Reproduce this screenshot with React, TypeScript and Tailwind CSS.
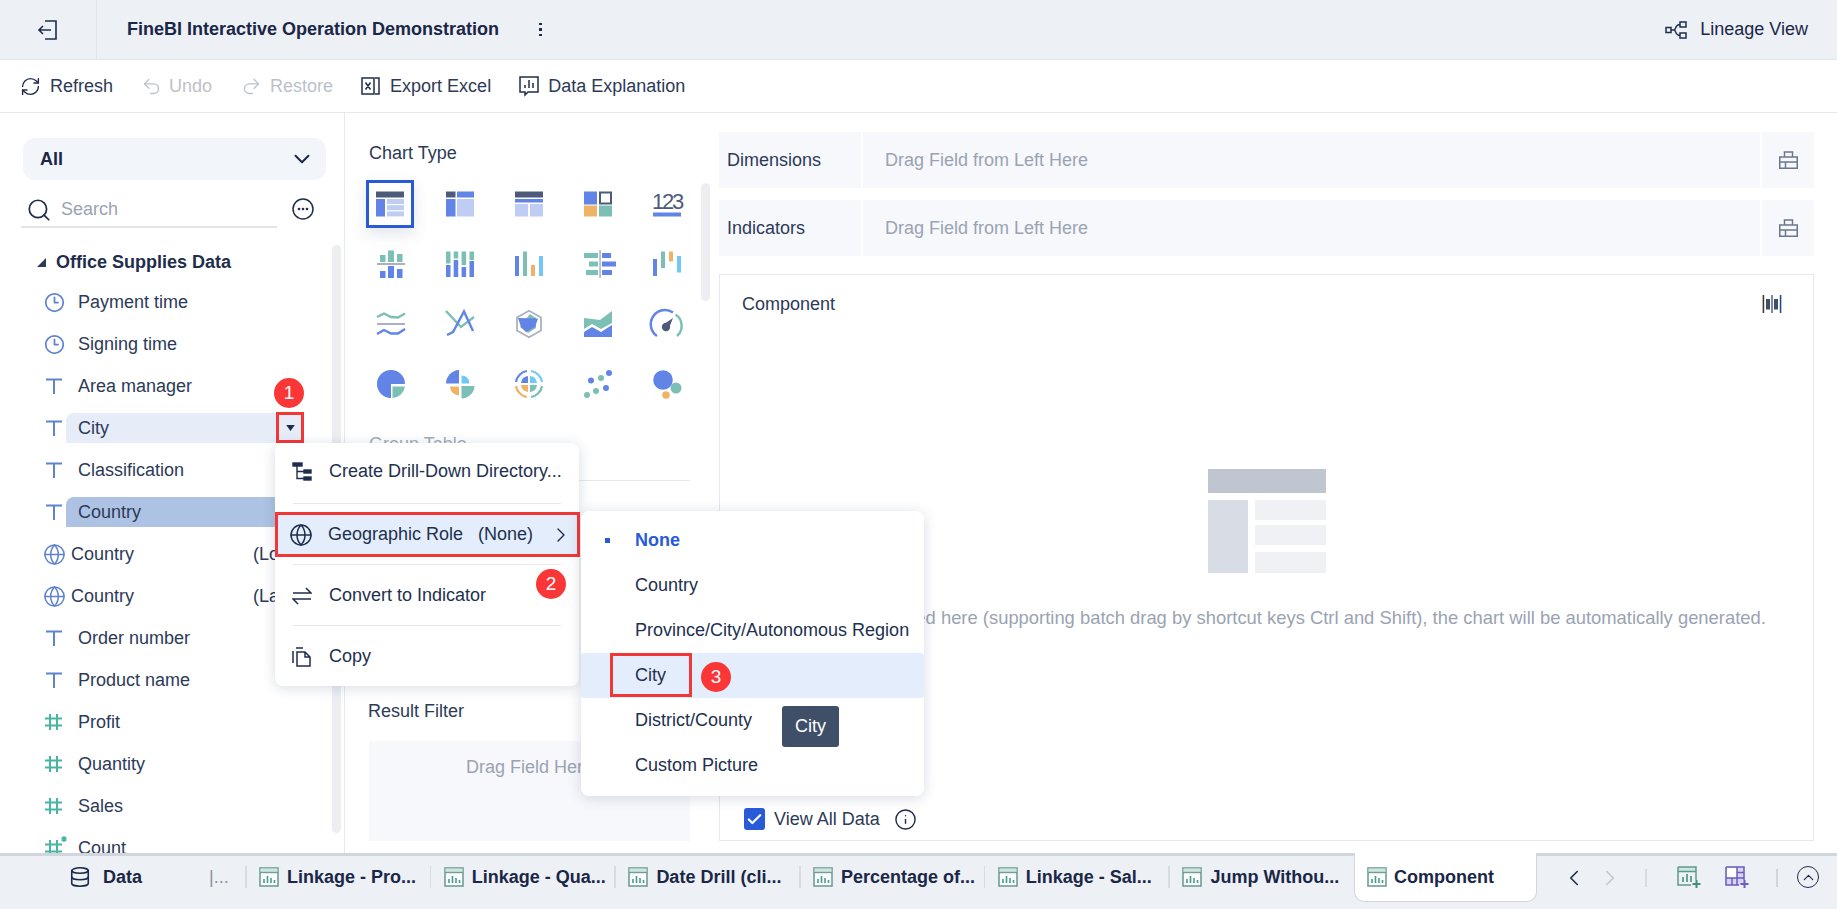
import React from "react";
import { ChevronDown, ChevronLeft, ChevronRight, ChevronUp, RefreshCw, Undo2, Redo2, Search, Globe, Clock3, Info, Check, Database } from "lucide-react";

const B = "#6184e6", P = "#bfcdf5", T = "#7cbfb4", O = "#efb366", D = "#4d5a7a", L = "#72c8f4";

function R({ x, y, w, h, f }: { x: number; y: number; w: number; h: number; f: string }) {
  return <rect x={x} y={y} width={w} height={h} fill={f} />;
}

const chartIcons: React.ReactNode[] = [
  <><R x={0} y={1.5} w={28} h={6} f={D} /><R x={0} y={9} w={9} h={17.5} f={B} /><R x={11} y={9} w={17} h={5} f={P} /><R x={11} y={15.2} w={17} h={5} f={P} /><R x={11} y={21.4} w={17} h={5} f={P} /></>,
  <><R x={0} y={1.5} w={9.5} h={6} f={D} /><R x={11} y={1.5} w={17} h={6} f={B} /><R x={0} y={9} w={9.5} h={17.5} f={B} /><R x={11} y={9} w={17} h={17.5} f={P} /></>,
  <><R x={0} y={1.5} w={28} h={6} f={D} /><R x={0} y={9} w={28} h={3.5} f={B} /><R x={0} y={14} w={13} h={12.5} f={P} /><R x={15} y={14} w={13} h={12.5} f={P} /></>,
  <><R x={0} y={1.5} w={13} h={13} f={B} /><rect x={16} y={2.5} width={11} height={11} fill="none" stroke={D} strokeWidth={2} /><R x={0} y={15.5} w={13} h={11} f={O} /><R x={15} y={15.5} w={13} h={11} f={T} /></>,
  <><text x={14} y={18.5} textAnchor="middle" fontSize={22} fill={D} style={{ fontFamily: "Liberation Sans, sans-serif", letterSpacing: "-2.2px" }}>123</text><R x={0} y={22.5} w={28} h={4} f={B} /></>,

  <><R x={3} y={5} w={5.5} h={7} f={T} /><R x={11} y={0.5} w={6} h={11.5} f={T} /><R x={20} y={4} w={5.5} h={8} f={T} /><R x={0} y={13} w={28} h={2} f="#a9b1c2" /><R x={3} y={21} w={5.5} h={7} f={B} /><R x={11} y={16} w={6} h={12} f={B} /><R x={20} y={19} w={5.5} h={9} f={B} /></>,
  <><R x={0} y={1.5} w={4.5} h={12} f={T} /><R x={0} y={15} w={4.5} h={12} f={B} /><R x={7.7} y={1.5} w={4.5} h={7} f={T} /><R x={7.7} y={10} w={4.5} h={17} f={B} /><R x={15.6} y={1.5} w={4.5} h={13.5} f={T} /><R x={15.6} y={17} w={4.5} h={10} f={B} /><R x={23.5} y={1.5} w={4.5} h={8.5} f={T} /><R x={23.5} y={11} w={4.5} h={16} f={B} /></>,
  <><R x={0} y={6} w={4} h={20} f={B} /><R x={8} y={1.5} w={4} h={24.5} f={T} /><R x={16} y={15} w={4} h={11} f={O} /><R x={24} y={6} w={4} h={20} f={L} /></>,
  <><R x={15.3} y={0} w={1.5} h={28} f="#a9b1c2" /><R x={0} y={3} w={14} h={5} f={T} /><R x={5} y={11.5} w={9} h={5} f={T} /><R x={2} y={20} w={12} h={5} f={T} /><R x={18} y={3} w={9} h={5} f={B} /><R x={18} y={11.5} w={14} h={5} f={B} /><R x={18} y={20} w={10} h={5} f={B} /></>,
  <><R x={0} y={9} w={4} h={17} f={B} /><R x={8} y={1.5} w={4} h={16.5} f={T} /><R x={16} y={1.5} w={4} h={10} f={O} /><R x={24} y={6} w={4} h={16.5} f={L} /></>,

  <><path d="M0 7 L7 3.5 L14 7 L21 7.5 L28 3.5" fill="none" stroke={T} strokeWidth={2.4} /><R x={0} y={13} w={28} h={2} f="#a9b1c2" /><path d="M0 24 L7 20 L14 23.5 L21 23.5 L28 19" fill="none" stroke={B} strokeWidth={2.4} /></>,
  <><path d="M0 1 L15 17 L28 7" fill="none" stroke={T} strokeWidth={2.4} /><path d="M1 25 L7 22 L18 1.5 L27 21" fill="none" stroke={B} strokeWidth={2.4} /></>,
  <><path d="M14 0.8 L26 7.5 L26 20.5 L14 27.2 L2 20.5 L2 7.5 Z" fill="none" stroke="#a9b1c2" strokeWidth={1.8} /><path d="M15 4 L21 8 L21 18 L13 23 L5 17 Z" fill={T} /><path d="M3 8 L23 8.5 L20 17 L11 22 L6 17 Z" fill={B} /></>,
  <><path d="M0 8 L8 9 L16 10 L28 1 L28 13 L17 19 L8 14 L0 19 Z" fill={T} /><path d="M0 22 L8 17 L17 22 L28 15 L28 27 L0 27 Z" fill={B} /></>,
  <><path d="M4 26 A13.5 13.5 0 0 1 20 2.5" fill="none" stroke={B} strokeWidth={2.5} /><path d="M22.5 4.5 A13.5 13.5 0 0 1 24 26" fill="none" stroke={T} strokeWidth={2.5} /><circle cx={13} cy={17} r={4.2} fill={D} /><path d="M10.5 14.5 L20 8 L15.5 19.5 Z" fill={D} /></>,

  <><path d="M14 14 H28 A14 14 0 1 0 14 28 Z" fill={B} /><path d="M15.5 16.5 H28 A13.5 13.5 0 0 1 15.5 28 Z" fill={T} /></>,
  <><path d="M13 13.5 V0 A13.5 13.5 0 0 0 0 13.5 Z" fill={B} /><path d="M15.5 13.5 V5.5 A8 8 0 0 1 23.5 13.5 Z" fill={L} /><path d="M13 16.5 H4 A9 9 0 0 0 13 25.5 Z" fill={O} /><path d="M15.5 16 H28.5 A13 13 0 0 1 15.5 28.5 Z" fill={T} /></>,
  <><path d="M13 13 L13 6 A8 8 0 0 0 6 13 Z" fill={B} /><path d="M15 13 L15 6 A8 8 0 0 1 22 13 Z" fill={L} /><path d="M13 15 L6 15 A8 8 0 0 0 13 22 Z" fill={O} /><path d="M15 15 L22 15 A8 8 0 0 1 15 22 Z" fill={T} /><path d="M1 12 A13 13 0 0 1 12 1" fill="none" stroke={B} strokeWidth={2.2} /><path d="M16 1 A13 13 0 0 1 27 12" fill="none" stroke={L} strokeWidth={2.2} /><path d="M1 16 A13 13 0 0 0 12 27" fill="none" stroke={O} strokeWidth={2.2} /><path d="M16 27 A13 13 0 0 0 27 16" fill="none" stroke={T} strokeWidth={2.2} /></>,
  <><circle cx={7} cy={10.5} r={3} fill={B} /><circle cx={17} cy={8} r={3} fill={T} /><circle cx={25} cy={3} r={3} fill={B} /><circle cx={3} cy={25} r={3} fill={T} /><circle cx={12} cy={21} r={3} fill={T} /><circle cx={22} cy={18} r={3} fill={B} /></>,
  <><circle cx={10} cy={10} r={9.8} fill={B} /><circle cx={23} cy={18} r={5.5} fill={T} /><circle cx={13} cy={25} r={3.8} fill={O} /></>,
];

function ChartIcon({ i }: { i: number }) {
  return <svg width="28" height="28" viewBox="0 0 28 28" className="overflow-visible">{chartIcons[i]}</svg>;
}

function TypeIcon() {
  return <svg width="18" height="18" viewBox="0 0 18 18" fill="none" stroke="#5f83cf" strokeWidth="2"><path d="M1 2.5 H17 M9 2.5 V17" /></svg>;
}
function HashIcon({ star }: { star?: boolean }) {
  return (
    <svg width="20" height="18" viewBox="0 0 20 18" fill="none" stroke="#46b5a2" strokeWidth="2" className="overflow-visible">
      <path d="M1 5.5 H18 M1 12.5 H18 M6 1 V17 M13 1 V17" />
      {star && <path d="M20 -3 V3 M17.5 -1.5 L22.5 1.5 M22.5 -1.5 L17.5 1.5" strokeWidth="1.5" />}
    </svg>
  );
}
function TabIcon() {
  return (
    <svg width="20" height="20" viewBox="0 0 20 20" fill="none" className="shrink-0">
      <rect x="1" y="1" width="18" height="18" stroke="#6f9e95" strokeWidth="1.6" fill="#fbfcfd" />
      <rect x="1.5" y="1.5" width="17" height="4" fill="#cfe6e0" />
      <path d="M1 5.5 H19" stroke="#6f9e95" strokeWidth="1.4" />
      <path d="M5 16 V12 M8.5 16 V9 M12 16 V11 M15.5 16 V13" stroke="#4c9a8c" strokeWidth="1.6" />
    </svg>
  );
}

function Row({ icon, children }: { icon: React.ReactNode; children: React.ReactNode }) {
  return (
    <div className="flex h-[42px] items-center">
      <div className="flex w-[26px] ml-[41px] justify-center shrink-0">{icon}</div>
      {children}
    </div>
  );
}
const Txt = ({ children }: { children: React.ReactNode }) => <span className="ml-[11px] pl-0">{children}</span>;

function Badge({ n, cls }: { n: number; cls: string }) {
  return <div className={"absolute w-[30px] h-[30px] rounded-full bg-[#fb3636] text-white flex items-center justify-center text-[19px] " + cls}>{n}</div>;
}

const clock = <Clock3 size={21} color="#5f83cf" strokeWidth={2} />;
const globe = <Globe size={23} color="#5f83cf" strokeWidth={1.6} />;
const menuRow = "flex items-center h-[43px] relative";
const tabs = ["Linkage - Pro...", "Linkage - Qua...", "Date Drill (cli...", "Percentage of...", "Linkage - Sal...", "Jump Withou..."];

function DropRow({ label, mt }: { label: string; mt: string }) {
  return (
    <div className={"flex h-[56px] gap-[2px] " + mt}>
      <div className="w-[142px] bg-[#f7f8fc] flex items-center pl-[8px] text-[#2c3a58]">{label}</div>
      <div className="flex-1 bg-[#f7f8fc] flex items-center pl-[22px] text-[#9aa3b2]">Drag Field from Left Here</div>
      <div className="w-[52px] bg-[#f7f8fc] flex items-center justify-center">
        <svg width="19" height="18" viewBox="0 0 19 18" fill="none" stroke="#6b778c" strokeWidth="1.5"><path d="M0.75 6 H18.25 V17.25 H0.75 Z M5.5 6 V1 H13.5 V6 M0.75 11 H18.25 M6.5 11 V17" /></svg>
      </div>
    </div>
  );
}

export default function App() {
  return (
    <div className="relative h-[909px] w-full overflow-hidden flex flex-col bg-white text-[18px] text-[#2c3a58]" style={{ fontFamily: "'Liberation Sans', Arial, sans-serif" }}>
      {/* Header */}
      <div className="h-[60px] shrink-0 bg-[#edf0f5] border-b border-[#e2e5eb] flex items-center">
        <div className="w-[97px] h-full border-r border-[#e2e5eb] flex items-center justify-center">
          <svg width="22" height="22" viewBox="0 0 22 22" fill="none" stroke="#1f2d4d" strokeWidth="1.6"><path d="M8 2 H19 V20 H8 M14 11 H2 M6 7 L2 11 L6 15" /></svg>
        </div>
        <div className="ml-[30px] font-bold text-[#1a2747] whitespace-nowrap">FineBI Interactive Operation Demonstration</div>
        <div className="ml-[40px] flex flex-col gap-[3px]">
          <div className="w-[2.5px] h-[2.5px] bg-[#1f2d4d]" /><div className="w-[2.5px] h-[2.5px] bg-[#1f2d4d]" /><div className="w-[2.5px] h-[2.5px] bg-[#1f2d4d]" />
        </div>
        <div className="ml-auto mr-[29px] flex items-center gap-[13px] text-[#1a2747]">
          <svg width="22" height="18" viewBox="0 0 22 18" fill="none" stroke="#1f2d4d" strokeWidth="1.5"><rect x="1" y="6.5" width="5" height="5" /><rect x="15" y="1" width="6" height="5" /><rect x="15" y="12" width="6" height="5" /><path d="M6 9 H9 C11 9 10 3.5 15 3.5 M9 9 C11 9 10 14.5 15 14.5" /></svg>
          Lineage View
        </div>
      </div>
      {/* Toolbar */}
      <div className="h-[53px] shrink-0 border-b border-[#e6e8ee] flex items-center pl-[20px] text-[#2c3a58]">
        <div className="flex items-center gap-[9px]"><RefreshCw size={21} strokeWidth={1.6} color="#1f2d4d" />Refresh</div>
        <div className="flex items-center gap-[7px] ml-[28px] text-[#bcc1cb]"><Undo2 size={21} strokeWidth={1.6} />Undo</div>
        <div className="flex items-center gap-[8px] ml-[29px] text-[#bcc1cb]"><Redo2 size={21} strokeWidth={1.6} />Restore</div>
        <div className="flex items-center gap-[9px] ml-[28px]">
          <svg width="20" height="20" viewBox="0 0 20 20" fill="none" stroke="#1f2d4d" strokeWidth="1.5"><path d="M1 2 H13 V18 H1 Z M14 2 H18 V18 H14 M4.5 6.5 L9.5 13.5 M9.5 6.5 L4.5 13.5" /></svg>
          Export Excel
        </div>
        <div className="flex items-center gap-[9px] ml-[28px]">
          <svg width="20" height="22" viewBox="0 0 20 22" fill="none" stroke="#1f2d4d" strokeWidth="1.5"><path d="M1 2 H19 V17 H9 L6 20 V17 H1 Z M6 13 V10 M10 13 V5 M14 13 V8" /></svg>
          Data Explanation
        </div>
      </div>
      {/* Main */}
      <div className="flex-1 flex min-h-0">
        {/* Left */}
        <div className="relative w-[345px] shrink-0 border-r border-[#e6e8ee] overflow-hidden">
          <div className="mt-[25px] mx-[23px] w-[303px] h-[42px] rounded-[12px] bg-[#f2f6fb] flex items-center justify-between pl-[17px] pr-[11px] font-bold text-[#1a2747]">
            All <ChevronDown size={26} strokeWidth={1.8} />
          </div>
          <div className="flex items-center mt-[11px] ml-[21px] h-[37px]">
            <div className="w-[256px] h-full border-b-2 border-[#e3e5ea] flex items-center pl-[5px] pt-[2px] gap-[9px] text-[#9aa3b2]">
              <Search size={26} color="#1f2d4d" strokeWidth={1.6} />Search
            </div>
            <svg className="ml-[15px] mb-[2px]" width="22" height="22" viewBox="0 0 22 22" fill="none" stroke="#1f2d4d" strokeWidth="1.5"><circle cx="11" cy="11" r="10" /><circle cx="7" cy="11" r=".6" /><circle cx="11" cy="11" r=".6" /><circle cx="15" cy="11" r=".6" /></svg>
          </div>
          <div className="flex items-center h-[24px] mt-[22px] ml-[37px] font-bold text-[#1f2d4d]">
            <svg width="9" height="9" viewBox="0 0 9 9" fill="#2c3a58"><path d="M9 0 V9 H0 Z" /></svg>
            <span className="ml-[10px]">Office Supplies Data</span>
          </div>
          <div className="mt-[7px]">
            <Row icon={clock}><Txt>Payment time</Txt></Row>
            <Row icon={clock}><Txt>Signing time</Txt></Row>
            <Row icon={<TypeIcon />}><Txt>Area manager</Txt></Row>
            <Row icon={<TypeIcon />}>
              <div className="w-[236px] h-[30px] -ml-[1px] pl-[12px] rounded-tl-[8px] bg-[#e6edf9] flex items-center">City</div>
            </Row>
            <Row icon={<TypeIcon />}><Txt>Classification</Txt></Row>
            <Row icon={<TypeIcon />}>
              <div className="w-[236px] h-[30px] -ml-[1px] pl-[12px] rounded-tl-[8px] bg-[#aec3e4] flex items-center">Country</div>
            </Row>
            <Row icon={globe}><span className="ml-[4px] w-[182px]">Country</span><span>(Longitude)</span></Row>
            <Row icon={globe}><span className="ml-[4px] w-[182px]">Country</span><span>(Latitude)</span></Row>
            <Row icon={<TypeIcon />}><Txt>Order number</Txt></Row>
            <Row icon={<TypeIcon />}><Txt>Product name</Txt></Row>
            <Row icon={<HashIcon />}><Txt>Profit</Txt></Row>
            <Row icon={<HashIcon />}><Txt>Quantity</Txt></Row>
            <Row icon={<HashIcon />}><Txt>Sales</Txt></Row>
            <Row icon={<HashIcon star />}><Txt>Count</Txt></Row>
          </div>
          <div className="absolute left-[332px] top-[132px] bottom-[20px] w-[9px] rounded-full bg-[#eceef2]" />
        </div>
        {/* Middle */}
        <div className="relative w-[374px] shrink-0 overflow-hidden">
          <div className="pt-[27px] pl-[24px] h-[61px]">Chart Type</div>
          <div className="grid grid-cols-[repeat(5,69px)] auto-rows-[60px] ml-[11px]">
            {chartIcons.map((_, i) => (
              <div key={i} className="flex items-center justify-center">
                {i === 0 ? (
                  <div className="-ml-[1px] w-[48px] h-[48px] border-[3px] border-[#2a5bd7] flex items-center justify-center shadow-[0_6px_14px_rgba(60,80,120,0.15)]"><ChartIcon i={i} /></div>
                ) : <ChartIcon i={i} />}
              </div>
            ))}
          </div>
          <div className="mt-[17px] ml-[24px] h-[24px] text-[#a5acb9]">Group Table</div>
          <div className="mt-[25px] ml-[24px] w-[321px] h-[1px] bg-[#e6e8ee]" />
          <div className="mt-[17px] ml-[24px] h-[24px]">Component Style</div>
          <div className="mt-[176px] ml-[23px] h-[24px]">Result Filter</div>
          <div className="mt-[19px] ml-[24px] w-[321px] h-[100px] bg-[#f7f8fc] text-[#9aa3b2] pt-[13px] text-center">Drag Field Here</div>
          <div className="absolute left-[356px] top-[70px] w-[9px] h-[118px] rounded-full bg-[#eceef2]" />
        </div>
        {/* Right */}
        <div className="flex-1 min-w-0 pt-[19px] pr-[23px] flex flex-col">
          <DropRow label="Dimensions" mt="" />
          <DropRow label="Indicators" mt="mt-[12px]" />
          <div className="mt-[18px] h-[567px] border border-[#e6e8ee] flex flex-col">
            <div className="flex items-center justify-between h-[24px] mt-[17px] pl-[22px] pr-[31px]">
              Component
              <svg width="20" height="20" viewBox="0 0 20 20" fill="none">
                <path d="M0.6 1 V19" stroke="#d9874a" strokeWidth="0.8" /><path d="M1.6 1 V19" stroke="#2d3a58" strokeWidth="1.2" />
                <path d="M10 1 V19" stroke="#2d3a58" strokeWidth="1.2" />
                <path d="M18.4 1 V19" stroke="#2d3a58" strokeWidth="1.2" /><path d="M19.4 1 V19" stroke="#72b8f0" strokeWidth="0.8" />
                <rect x="4" y="5" width="4" height="10.5" fill="#3f4f68" /><rect x="12" y="5" width="4" height="10.5" fill="#3f4f68" />
              </svg>
            </div>
            <div className="mt-[153px] flex flex-col items-center">
              <svg width="118" height="104" viewBox="0 0 118 104">
                <rect x="0" y="0" width="118" height="24" fill="#c0c6d0" />
                <rect x="0" y="31" width="40" height="73" fill="#d8dce4" />
                <rect x="47" y="31" width="71" height="20" fill="#eff1f5" />
                <rect x="47" y="56" width="71" height="20" fill="#eff1f5" />
                <rect x="47" y="83" width="71" height="21" fill="#eff1f5" />
              </svg>
              <div className="mt-[31px] text-[#9aa3b2] text-[18.4px] whitespace-nowrap">Once this is dragged here (supporting batch drag by shortcut keys Ctrl and Shift), the chart will be automatically generated.</div>
            </div>
            <div className="mt-auto mb-[9px] ml-[24px] flex items-center h-[24px]">
              <div className="w-[21px] h-[22px] rounded-[3px] bg-[#2a5bd7] flex items-center justify-center"><Check size={17} color="white" strokeWidth={3.2} /></div>
              <span className="ml-[9px]">View All Data</span>
              <Info size={23} strokeWidth={1.5} color="#1f2d4d" className="ml-[14px]" />
            </div>
          </div>
        </div>
      </div>
      {/* Bottom */}
      <div className="h-[56px] shrink-0 bg-[#edf0f5] border-t-[3px] border-[#d0d5de] flex pb-[11px] text-[#1a2747] font-bold relative">
        <div className="w-[245px] shrink-0 flex items-center">
          <Database size={22} strokeWidth={1.7} className="ml-[69px]" />
          <span className="ml-[12px]">Data</span>
          <span className="ml-[67px] text-[#8a93a3] font-normal">|...</span>
        </div>
        {tabs.map((t) => (
          <div key={t} className="w-[184.7px] shrink-0 flex items-center pl-[14px] relative">
            <div className="absolute left-0 top-[10px] bottom-[10px] w-[1.5px] bg-[#d7dbe3]" />
            <TabIcon />
            <span className="ml-[8px] whitespace-nowrap">{t}</span>
          </div>
        ))}
        <div className="absolute left-[1354px] -top-[3px] w-[183px] h-[49px] bg-white border border-t-0 border-[#d0d5de] rounded-b-[10px] flex items-center pl-[12px] gap-[7px]">
          <TabIcon />Component
        </div>
        <div className="absolute left-[1561px] top-[9px] h-[26px] flex items-center">
          <ChevronLeft size={26} strokeWidth={1.5} color="#1f2d4d" />
          <ChevronRight size={26} strokeWidth={1.5} color="#c2c7d0" className="ml-[10px]" />
        </div>
        <div className="absolute left-[1645px] top-[13px] h-[18px] w-[1.5px] bg-[#d7dbe3]" />
        <svg className="absolute left-[1677px] top-[10px]" width="24" height="23" viewBox="0 0 24 23" fill="none" stroke="#5d9a8d" strokeWidth="1.5">
          <rect x="1" y="1" width="18" height="4" fill="#cfe6e0" stroke="none" />
          <path d="M1 1 H19 V14 M1 1 V19 H14 M1 5.5 H19" />
          <path d="M6 16 V11 M10 16 V8 M14 16 V10" strokeWidth="1.8" />
          <path d="M19.5 14 V22 M15.5 18 H23.5" stroke="#3f8f7f" strokeWidth="2" />
        </svg>
        <svg className="absolute left-[1725px] top-[10px]" width="24" height="23" viewBox="0 0 24 23" fill="none" stroke="#6a5cc0" strokeWidth="1.5">
          <rect x="1" y="1" width="18" height="18" fill="#d9d5f0" stroke="none" />
          <rect x="2" y="2" width="10" height="10" fill="#ffffff" stroke="none" />
          <path d="M1 1 H19 V14 M1 1 V19 H14 M12 1 V12 M12 6.5 H19 M1 12 H19 M7 12 V19 M12 12 V19" />
          <path d="M19.5 14 V22 M15.5 18 H23.5" strokeWidth="2" />
        </svg>
        <div className="absolute left-[1776px] top-[13px] h-[18px] w-[1.5px] bg-[#d0d5de]" />
        <div className="absolute left-[1797px] top-[10px] w-[22px] h-[22px] rounded-full border-[1.5px] border-[#1f2d4d] flex items-center justify-center"><ChevronUp size={17} strokeWidth={1.6} /></div>
      </div>

      {/* Overlays */}
      <div className="absolute left-[276px] top-[412px] w-[28px] h-[31px] border-[3px] border-[#f23737] flex items-center justify-center">
        <svg width="9" height="6" viewBox="0 0 10 7" fill="#1f2d4d"><path d="M0 0 H10 L5 7 Z" /></svg>
      </div>
      <Badge n={1} cls="left-[274px] top-[378px]" />

      <div className="absolute left-[275px] top-[443px] w-[304px] h-[243px] bg-white rounded-[8px] shadow-[0_2px_14px_rgba(40,60,100,0.18)] text-[#22304f]">
        <div className={menuRow + " mt-[7px]"}>
          <svg className="ml-[17px]" width="20" height="20" viewBox="0 0 20 20" fill="#1f2d4d" stroke="#1f2d4d" strokeWidth="1.4"><rect x="1" y="1" width="9" height="3" /><rect x="12" y="8" width="7" height="3" /><rect x="12" y="15" width="7" height="3" /><path d="M5 4 V16.5 H12 M5 9.5 H12" fill="none" /></svg>
          <span className="ml-[17px] whitespace-nowrap">Create Drill-Down Directory...</span>
        </div>
        <div className="mx-[18px] mt-[10px] h-[1px] bg-[#e6e8ee]" />
        <div className="mt-[8px] flex items-center h-[45px] w-[305px] bg-[#e4edfb] border-[3px] border-[#f23737] relative">
          <Globe size={24} color="#1f2d4d" strokeWidth={1.5} className="ml-[11px]" />
          <span className="ml-[15px] whitespace-pre">Geographic Role   (None)</span>
          <ChevronRight size={24} strokeWidth={1.4} color="#1f2d4d" className="ml-auto mr-[4px]" />
        </div>
        <div className="mx-[18px] mt-[7px] h-[1px] bg-[#e6e8ee]" />
        <div className={menuRow + " mt-[9px]"}>
          <svg className="ml-[17px]" width="20" height="20" viewBox="0 0 20 20" fill="none" stroke="#1f2d4d" strokeWidth="1.5"><path d="M1 7 H19 L14 2 M19 13 H1 L6 18" /></svg>
          <span className="ml-[17px]">Convert to Indicator</span>
        </div>
        <div className="mx-[18px] mt-[8px] h-[1px] bg-[#e6e8ee]" />
        <div className={menuRow + " mt-[9px]"}>
          <svg className="ml-[17px]" width="20" height="20" viewBox="0 0 20 20" fill="none" stroke="#1f2d4d" strokeWidth="1.5"><path d="M4 1 H11 M1 4 V16 M5 5 H13 L18 10 V19 H5 Z M13 5 V10 H18" /></svg>
          <span className="ml-[17px]">Copy</span>
        </div>
      </div>
      <Badge n={2} cls="left-[536px] top-[569px]" />

      <div className="absolute left-[581px] top-[511px] w-[343px] h-[285px] bg-white rounded-[8px] shadow-[0_2px_14px_rgba(40,60,100,0.18)] text-[#22304f] pt-[7px]">
        <div className="h-[45px] flex items-center pl-[54px] font-bold text-[#2a5bd7] relative">
          <div className="absolute left-[24px] top-[20px] w-[5px] h-[5px] bg-[#2a5bd7]" />None
        </div>
        <div className="h-[45px] flex items-center pl-[54px]">Country</div>
        <div className="h-[45px] flex items-center pl-[54px] whitespace-nowrap">Province/City/Autonomous Region</div>
        <div className="h-[45px] flex items-center pl-[54px] bg-[#e4edfb] rounded-[3px]">City</div>
        <div className="h-[45px] flex items-center pl-[54px]">District/County</div>
        <div className="h-[45px] flex items-center pl-[54px]">Custom Picture</div>
      </div>
      <div className="absolute left-[610px] top-[653px] w-[82px] h-[44px] border-[3px] border-[#f23737]" />
      <Badge n={3} cls="left-[701px] top-[662px]" />
      <div className="absolute left-[782px] top-[706px] w-[57px] h-[41px] rounded-[3px] bg-[#3f4f68] text-white flex items-center justify-center">City</div>
    </div>
  );
}
